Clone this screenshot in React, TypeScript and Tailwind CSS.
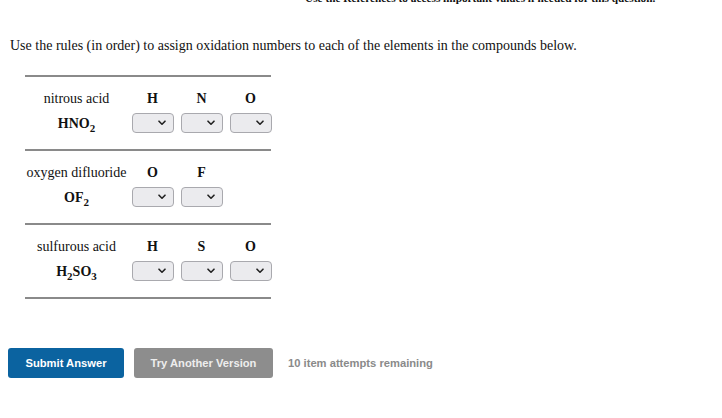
const serif = { fontFamily: '"Liberation Serif", "Times New Roman", serif' };

type Compound = {
  name: string;
  formula: React.ReactNode;
  elements: string[];
};

const compounds: Compound[] = [
  {
    name: 'nitrous acid',
    formula: (
      <>
        HNO<sub className="text-[11px] align-[-2px]">2</sub>
      </>
    ),
    elements: ['H', 'N', 'O'],
  },
  {
    name: 'oxygen difluoride',
    formula: (
      <>
        OF<sub className="text-[11px] align-[-2px]">2</sub>
      </>
    ),
    elements: ['O', 'F'],
  },
  {
    name: 'sulfurous acid',
    formula: (
      <>
        H<sub className="text-[11px] align-[-2px]">2</sub>SO<sub className="text-[11px] align-[-2px]">3</sub>
      </>
    ),
    elements: ['H', 'S', 'O'],
  },
];

function Dropdown() {
  return (
    <div className="w-[42px] h-[20px] rounded-[4px] border border-[#a9a9ae] bg-[#ebebee] flex items-center justify-end pr-[7px]">
      <svg width="8" height="6" viewBox="0 0 8 6" fill="none">
        <path d="M1 1.2 L4 4.2 L7 1.2" stroke="#222" strokeWidth="1.6" strokeLinecap="round" strokeLinejoin="round" />
      </svg>
    </div>
  );
}

function Rule() {
  return <div className="w-[246px] h-[2px] bg-[#8a8a8a]" />;
}

export default function App() {
  return (
    <div className="w-[722px] h-[418px] bg-white overflow-hidden text-[#111]" style={serif}>
      {/* clipped references banner */}
      <div className="h-[5px] overflow-hidden pl-[305px]">
        <div className="-mt-[9px] text-[11.3px] font-bold leading-[14px] whitespace-nowrap">
          Use the References to access important values if needed for this question.
        </div>
      </div>

      <p className="pl-[10px] mt-[32px] text-[14px] leading-[17px] whitespace-nowrap">
        Use the rules (in order) to assign oxidation numbers to each of the elements in the compounds below.
      </p>

      <div className="ml-[25px] mt-[21px]">
        <Rule />
        {compounds.map((c) => (
          <div key={c.name}>
            <div className="pt-[12px] pb-[14px] text-[14px]" style={serif}>
              <div className="flex h-[19px] items-center">
                <div className="w-[103px] text-center whitespace-nowrap">{c.name}</div>
                {c.elements.map((el, i) => (
                  <div key={i} className="w-[49px] text-center font-bold">{el}</div>
                ))}
              </div>
              <div className="flex h-[24px] mt-[3px] items-center">
                <div className="w-[103px] text-center font-bold">{c.formula}</div>
                {c.elements.map((el, i) => (
                  <div key={i} className="w-[49px] flex justify-center">
                    <Dropdown />
                  </div>
                ))}
              </div>
            </div>
            <Rule />
          </div>
        ))}
      </div>

      <div
        className="flex items-center pl-[8px] mt-[49px] text-[11.2px] font-bold"
        style={{ fontFamily: '"Liberation Sans", Arial, sans-serif' }}
      >
        <button className="w-[116px] h-[30px] rounded-[3px] bg-[#0b63a0] text-white">Submit Answer</button>
        <button className="ml-[10px] w-[139px] h-[30px] rounded-[3px] bg-[#8d8d8d] text-[#ededed]">
          Try Another Version
        </button>
        <span className="ml-[15px] text-[#8a8a8a]">10 item attempts remaining</span>
      </div>
    </div>
  );
}
